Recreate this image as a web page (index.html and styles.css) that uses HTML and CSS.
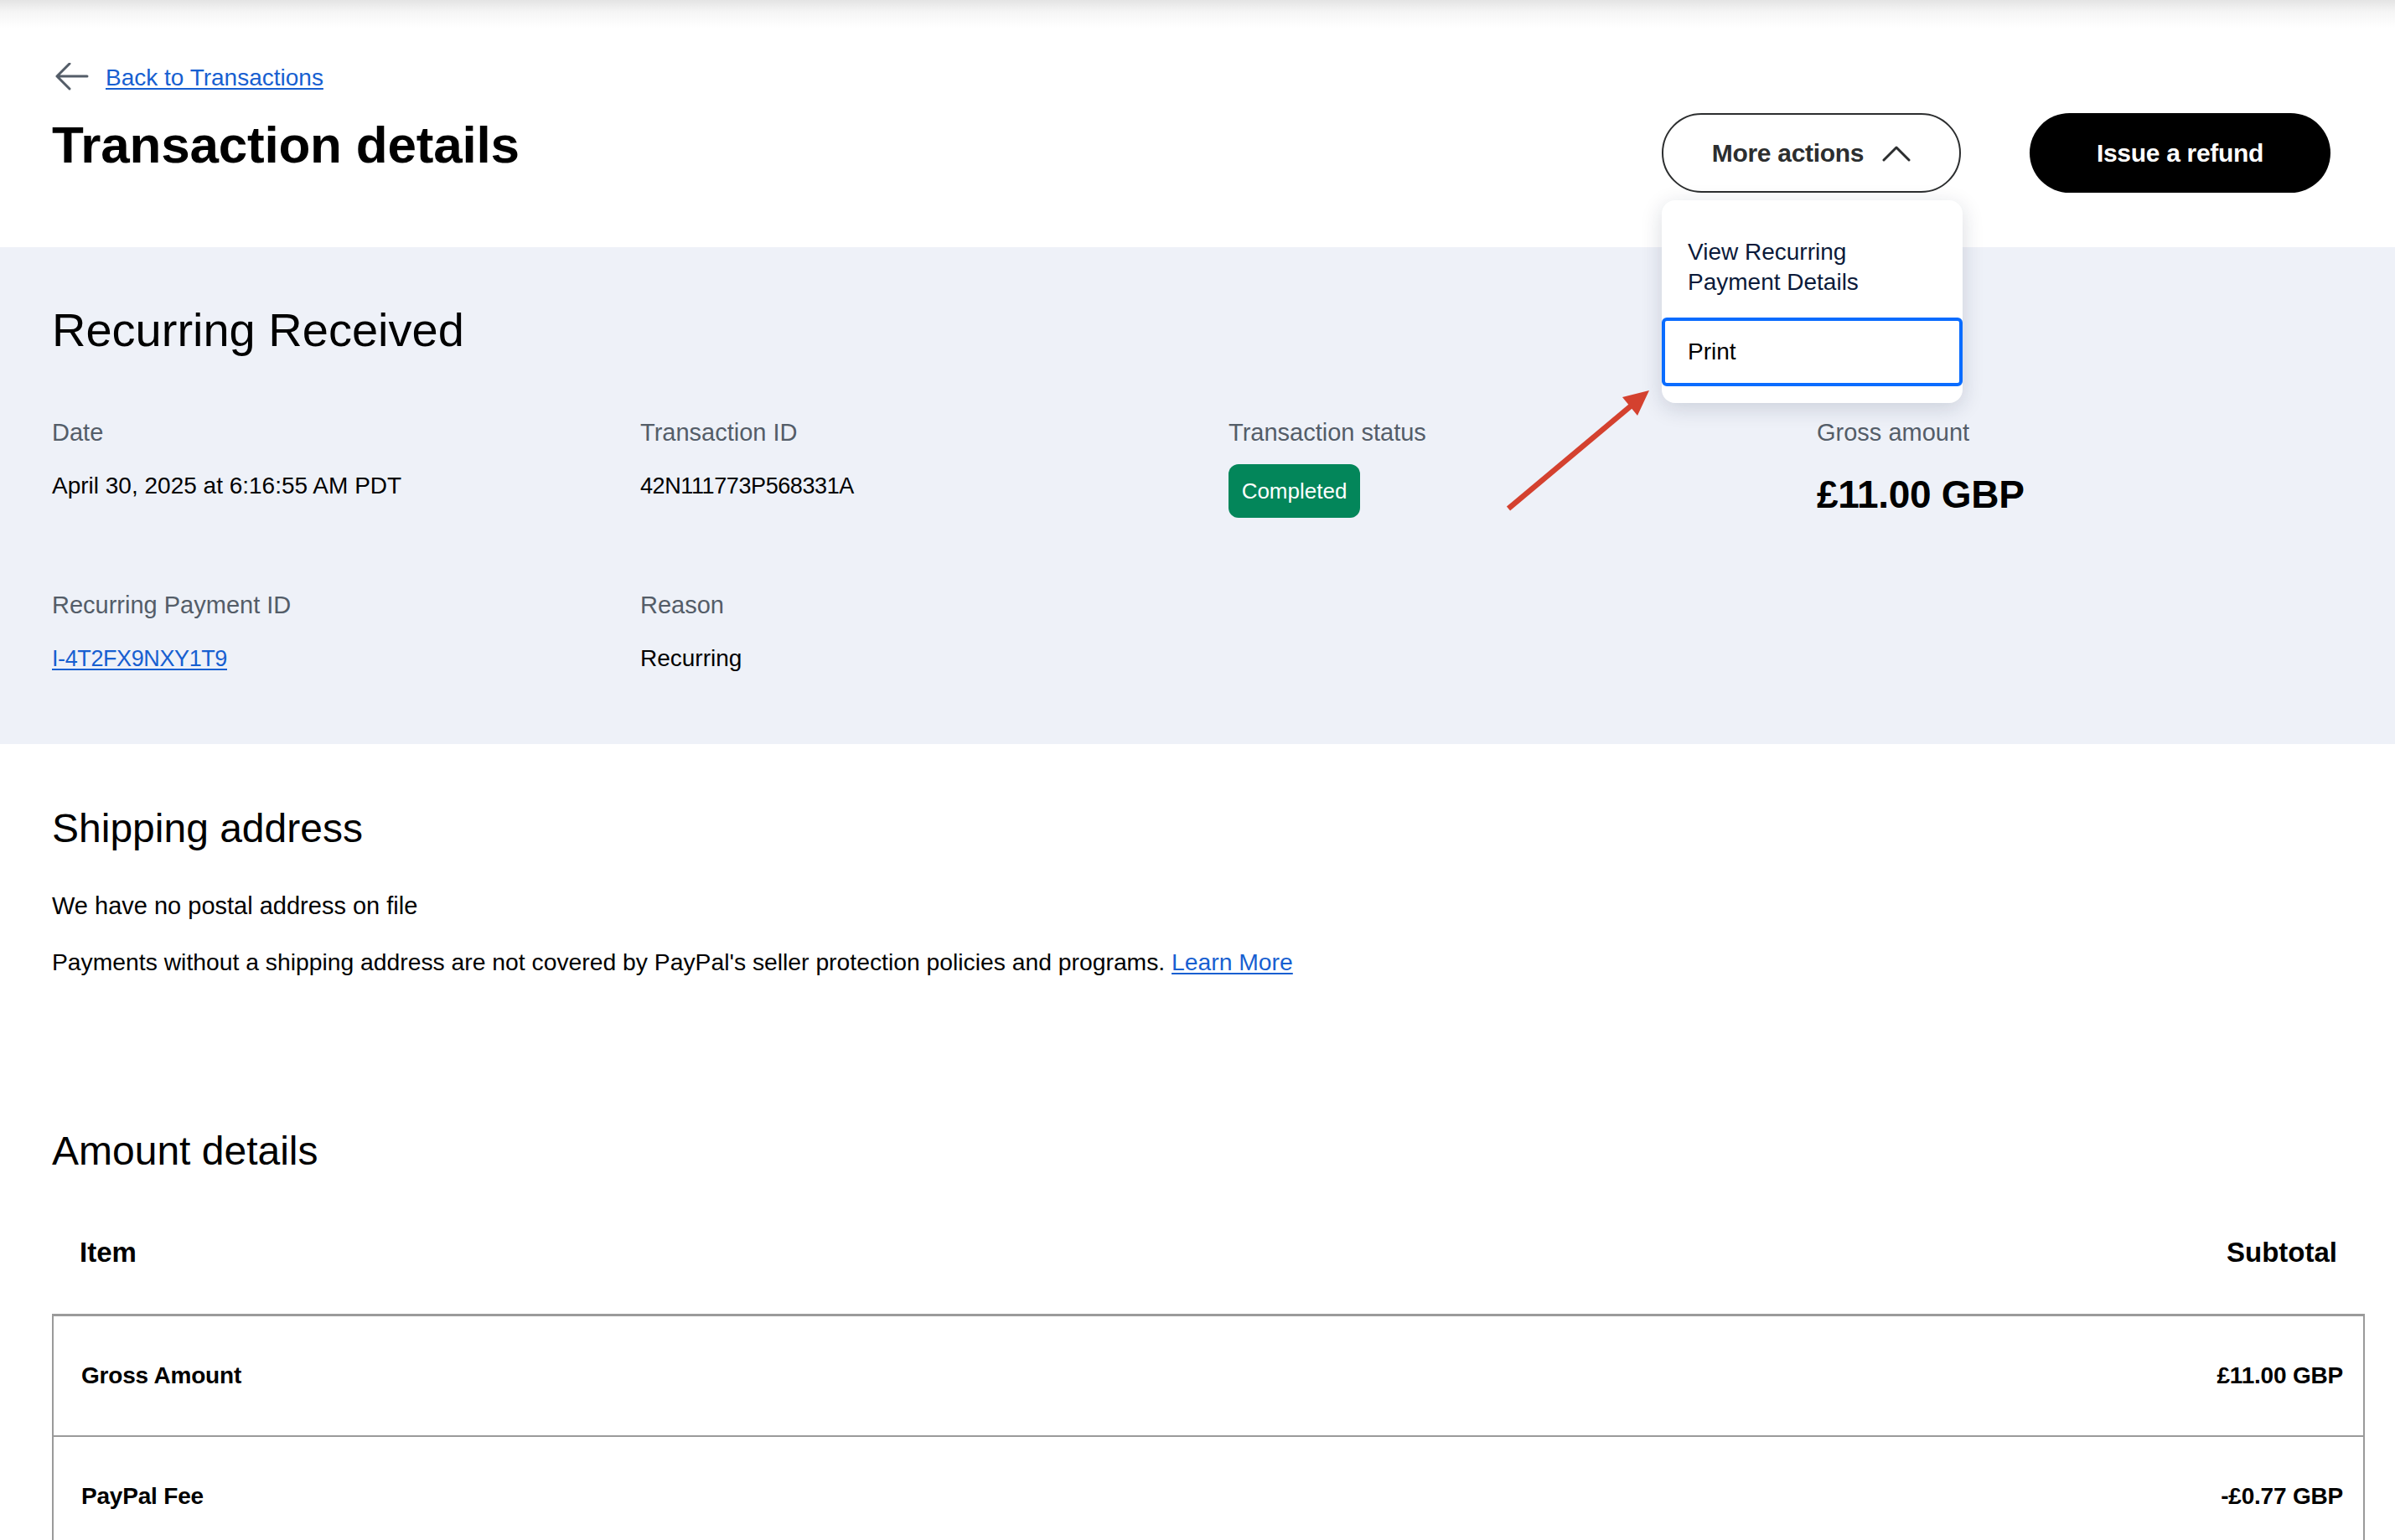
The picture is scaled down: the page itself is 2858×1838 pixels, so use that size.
FILE: index.html
```html
<!DOCTYPE html>
<html lang="en">
<head>
<meta charset="utf-8">
<title>Transaction details</title>
<link rel="stylesheet" href="styles.css">
</head>
<body>
<div class="page">
  <header class="page-header">
    <a class="back-link" href="#">
      <svg class="back-icon" width="44" height="36" viewBox="0 0 44 36" aria-hidden="true">
        <path d="M6 16H42M21 1L6 16L21 31" fill="none" stroke="#545d68" stroke-width="3" stroke-linecap="round" stroke-linejoin="round"/>
      </svg>
      <span class="back-text">Back to Transactions</span>
    </a>
    <div class="title-row">
      <h1 class="page-title">Transaction details</h1>
      <div class="actions">
        <div class="dropdown">
          <button class="btn btn-outline" type="button">
            <span>More actions</span>
            <svg class="chevron" width="34" height="20" viewBox="0 0 34 20" aria-hidden="true">
              <path d="M2 18L17 3L32 18" fill="none" stroke="#2c2e2f" stroke-width="3" stroke-linecap="round" stroke-linejoin="round"/>
            </svg>
          </button>
          <ul class="menu">
            <li class="menu-item">View Recurring<br>Payment Details</li>
            <li class="menu-item menu-item-focus">Print</li>
          </ul>
        </div>
        <button class="btn btn-solid" type="button">Issue a refund</button>
      </div>
    </div>
  </header>

  <section class="summary">
    <h2 class="summary-title">Recurring Received</h2>
    <div class="fields">
      <div class="field">
        <div class="field-label">Date</div>
        <div class="field-value">April 30, 2025 at 6:16:55 AM PDT</div>
      </div>
      <div class="field">
        <div class="field-label">Transaction ID</div>
        <div class="field-value field-id">42N111773P568331A</div>
      </div>
      <div class="field">
        <div class="field-label">Transaction status</div>
        <div class="field-value"><span class="badge">Completed</span></div>
      </div>
      <div class="field">
        <div class="field-label">Gross amount</div>
        <div class="field-value field-amount">£11.00 GBP</div>
      </div>
      <div class="field">
        <div class="field-label">Recurring Payment ID</div>
        <div class="field-value field-id"><a class="link" href="#">I-4T2FX9NXY1T9</a></div>
      </div>
      <div class="field">
        <div class="field-label">Reason</div>
        <div class="field-value">Recurring</div>
      </div>
    </div>
  </section>

  <section class="shipping">
    <h2 class="section-title">Shipping address</h2>
    <p class="text text-first">We have no postal address on file</p>
    <p class="text text-second">Payments without a shipping address are not covered by PayPal's seller protection policies and programs. <a class="link" href="#">Learn More</a></p>
  </section>

  <section class="amounts">
    <h2 class="section-title">Amount details</h2>
    <div class="amount-head">
      <span>Item</span>
      <span>Subtotal</span>
    </div>
    <div class="amount-table">
      <div class="amount-row">
        <span>Gross Amount</span>
        <span>£11.00 GBP</span>
      </div>
      <div class="amount-row">
        <span>PayPal Fee</span>
        <span>-£0.77 GBP</span>
      </div>
    </div>
  </section>

  <svg class="annotation-arrow" width="200" height="170" viewBox="0 0 200 170" aria-hidden="true">
    <line x1="20" y1="157" x2="168" y2="33" stroke="#d4412f" stroke-width="6.5"/>
    <polygon points="188,16 174,46 156,24" fill="#d4412f"/>
  </svg>
</div>
</body>
</html>
```

FILE: styles.css
```css
html, body {
  margin: 0;
  padding: 0;
  background: #ffffff;
}

body {
  font-family: "Liberation Sans", Arial, sans-serif;
  color: #000000;
}

.page {
  position: relative;
  min-height: 100vh;
}

/* ---------- Header ---------- */
.page-header {
  padding: 75px 77px 65px 62px;
  background: linear-gradient(to bottom, #e4e4e4 0px, #f5f5f5 14px, #ffffff 34px);
}

.back-link {
  display: flex;
  align-items: center;
  width: max-content;
  height: 36px;
  text-decoration: none;
}

.back-icon {
  display: block;
  margin-right: 20px;
}

.back-text {
  font-size: 28px;
  line-height: 36px;
  color: #175fd1;
  text-decoration: underline;
  text-decoration-thickness: 2px;
  text-underline-offset: 3px;
}

.title-row {
  display: flex;
  justify-content: space-between;
  align-items: flex-start;
  margin-top: 24px;
}

.page-title {
  margin: 2px 0 0;
  font-size: 62px;
  line-height: 72px;
  font-weight: 700;
  letter-spacing: -0.2px;
  color: #000000;
}

.actions {
  display: flex;
  align-items: flex-start;
  gap: 82px;
}

.dropdown {
  position: relative;
}

.btn {
  display: flex;
  align-items: center;
  justify-content: center;
  box-sizing: border-box;
  height: 95px;
  border-radius: 48px;
  font-family: "Liberation Sans", Arial, sans-serif;
  font-size: 30px;
  font-weight: 700;
  letter-spacing: -0.3px;
  cursor: pointer;
}

.btn-outline {
  width: 357px;
  gap: 22px;
  background: #ffffff;
  color: #2c2e2f;
  border: 2px solid #2c2e2f;
  padding: 0;
}

.chevron {
  display: block;
}

.btn-solid {
  width: 359px;
  background: #000000;
  color: #ffffff;
  border: none;
}

.menu {
  position: absolute;
  top: 104px;
  left: 0;
  width: 359px;
  box-sizing: border-box;
  margin: 0;
  padding: 8px 0 20px;
  list-style: none;
  background: #ffffff;
  border-radius: 16px;
  box-shadow: 0 6px 26px rgba(20, 30, 60, 0.16);
  z-index: 5;
}

.menu-item {
  padding: 36px 31px 24px;
  font-size: 28px;
  line-height: 36px;
  color: #0b1a3a;
}

.menu-item-focus {
  padding: 19px 27px;
  border: 4px solid #0a6cff;
  border-radius: 6px;
  color: #000000;
}

/* ---------- Summary ---------- */
.summary {
  background: #eef1f8;
  padding: 67px 36px 84px 62px;
}

.summary-title {
  margin: 0 0 72px;
  font-size: 56px;
  line-height: 64px;
  font-weight: 400;
  color: #000000;
}

.fields {
  display: grid;
  grid-template-columns: repeat(4, 1fr);
  column-gap: 48px;
  row-gap: 86px;
}

.field {
  display: flex;
  flex-direction: column;
  gap: 28px;
}

.field-label {
  font-size: 29px;
  line-height: 36px;
  color: #545d68;
}

.field-value {
  font-size: 28px;
  line-height: 36px;
  color: #000000;
}

.field-id {
  font-size: 27px;
  letter-spacing: -0.4px;
}

.field-amount {
  font-size: 46px;
  line-height: 56px;
  font-weight: 700;
  letter-spacing: -0.3px;
}

.badge {
  display: inline-flex;
  align-items: center;
  justify-content: center;
  box-sizing: border-box;
  height: 64px;
  width: 157px;
  margin-top: -8px;
  border-radius: 12px;
  background: #03865a;
  color: #ffffff;
  font-size: 26px;
}

.link {
  color: #175fd1;
  text-decoration: underline;
  text-decoration-thickness: 2px;
  text-underline-offset: 3px;
}

/* ---------- Shipping ---------- */
.shipping {
  padding: 73px 36px 0 62px;
}

.section-title {
  margin: 0;
  font-size: 48px;
  line-height: 56px;
  font-weight: 400;
  color: #000000;
}

.text {
  margin: 0;
  font-size: 29px;
  line-height: 36px;
  color: #000000;
}

.text-first {
  margin-top: 46px;
}

.text-second {
  margin-top: 31px;
  font-size: 28.3px;
}

/* ---------- Amount details ---------- */
.amounts {
  padding: 180px 36px 0 62px;
}

.amount-head {
  display: flex;
  justify-content: space-between;
  padding: 73px 33px 53px;
  font-size: 33px;
  line-height: 40px;
  font-weight: 700;
}

.amount-table {
  border: 2px solid #9a9a9a;
  border-top-width: 3px;
}

.amount-row {
  display: flex;
  justify-content: space-between;
  align-items: center;
  height: 142px;
  padding: 0 24px 0 33px;
  font-size: 28px;
  font-weight: 700;
  letter-spacing: -0.2px;
}

.amount-row + .amount-row {
  border-top: 2px solid #9a9a9a;
}

/* ---------- Annotation ---------- */
.annotation-arrow {
  position: absolute;
  left: 1780px;
  top: 450px;
  z-index: 6;
}
```
